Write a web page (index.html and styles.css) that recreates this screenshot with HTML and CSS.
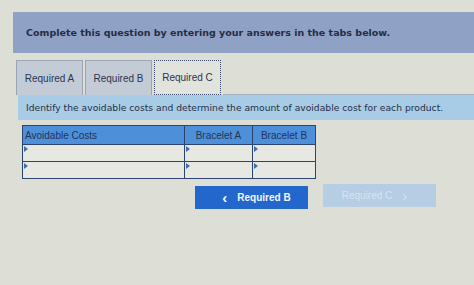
FILE: index.html
```html
<!DOCTYPE html>
<html>
<head>
<meta charset="utf-8">
<link rel="stylesheet" href="styles.css">
</head>
<body>
<div class="page">
  <div class="banner">Complete this question by entering your answers in the tabs below.</div>
  <div class="tabs">
    <div class="tab">Required A</div>
    <div class="tab">Required B</div>
    <div class="tab active">Required C</div>
    <div class="tab-rest"></div>
  </div>
  <div class="instr">Identify the avoidable costs and determine the amount of avoidable cost for each product.</div>
  <table class="grid">
    <thead>
      <tr><th class="c1">Avoidable Costs</th><th class="c2">Bracelet A</th><th class="c3">Bracelet B</th></tr>
    </thead>
    <tbody>
      <tr><td><span class="mark"></span></td><td><span class="mark"></span></td><td><span class="mark"></span></td></tr>
      <tr><td><span class="mark"></span></td><td><span class="mark"></span></td><td><span class="mark"></span></td></tr>
    </tbody>
  </table>
  <div class="nav">
    <div class="btn prev"><span class="chev">&#8249;</span>Required B</div>
    <div class="btn next">Required C<span class="chev">&#8250;</span></div>
  </div>
</div>
</body>
</html>
```
FILE: styles.css
```css
html, body {
  margin: 0;
  padding: 0;
}
body {
  width: 474px;
  height: 285px;
  overflow: hidden;
  background: #dddfd6;
  font-family: "DejaVu Sans", Verdana, sans-serif;
  color: #2b3148;
}
.page {
  padding: 12px 0 0 13px;
}
.banner {
  background: #8fa2c6;
  height: 41px;
  box-sizing: border-box;
  padding: 0 0 0 13px;
  display: flex;
  align-items: center;
  font-size: 9.5px;
  font-weight: bold;
  color: #262c44;
}
.tabs {
  display: flex;
  margin-top: 7px;
  margin-left: 3px;
  height: 35px;
}
.tab {
  width: 67px;
  box-sizing: border-box;
  margin-right: 2px;
  background: #c3ccd6;
  border: 1px solid #9aa6b4;
  border-bottom: none;
  display: flex;
  align-items: center;
  justify-content: center;
  font-family: "Liberation Sans", Arial, sans-serif;
  font-size: 10px;
  color: #2b3550;
}
.tab.active {
  background: #e2e3dc;
  border: 1px dotted #3b4a6a;
}
.tab-rest {
  flex: 1;
  border-bottom: 1px solid #a6b0bc;
}
.instr {
  margin-left: 5px;
  background: #a9cce6;
  height: 25px;
  box-sizing: border-box;
  padding-left: 8px;
  display: flex;
  align-items: center;
  font-size: 9.2px;
  color: #263046;
}
.grid {
  margin: 5px 0 0 9px;
  border-collapse: collapse;
  width: 294px;
  font-family: "Liberation Sans", Arial, sans-serif;
}
.grid th {
  background: #4d8fd8;
  height: 18px;
  padding: 0 2px;
  font-size: 10px;
  font-weight: normal;
  color: #24345a;
  border: 1.5px solid #2c4270;
}
.grid th.c1 { text-align: left; width: 157px; }
.grid th.c2 { width: 63px; }
.grid td {
  height: 16px;
  background: #e8e8e2;
  border: 1.5px solid #2c4270;
  padding: 0;
  position: relative;
}
.mark {
  position: absolute;
  left: 1px;
  top: 1px;
  width: 0;
  height: 0;
  border-top: 3px solid transparent;
  border-bottom: 3px solid transparent;
  border-left: 4px solid #3a6fb8;
}
.nav {
  display: flex;
  gap: 15px;
  margin: 7px 0 0 182px;
  align-items: flex-start;
}
.btn {
  width: 113px;
  height: 23px;
  display: flex;
  align-items: center;
  justify-content: center;
  font-family: "Liberation Sans", Arial, sans-serif;
  font-size: 10px;
  font-weight: bold;
}
.btn.prev {
  background: #2366cc;
  color: #f2f6ff;
}
.btn.next {
  background: #b6cde4;
  color: #d8e4f0;
  margin-top: -2px;
  font-weight: normal;
}
.chev {
  font-size: 15px;
  line-height: 1;
  margin: 0 10px;
}
```
